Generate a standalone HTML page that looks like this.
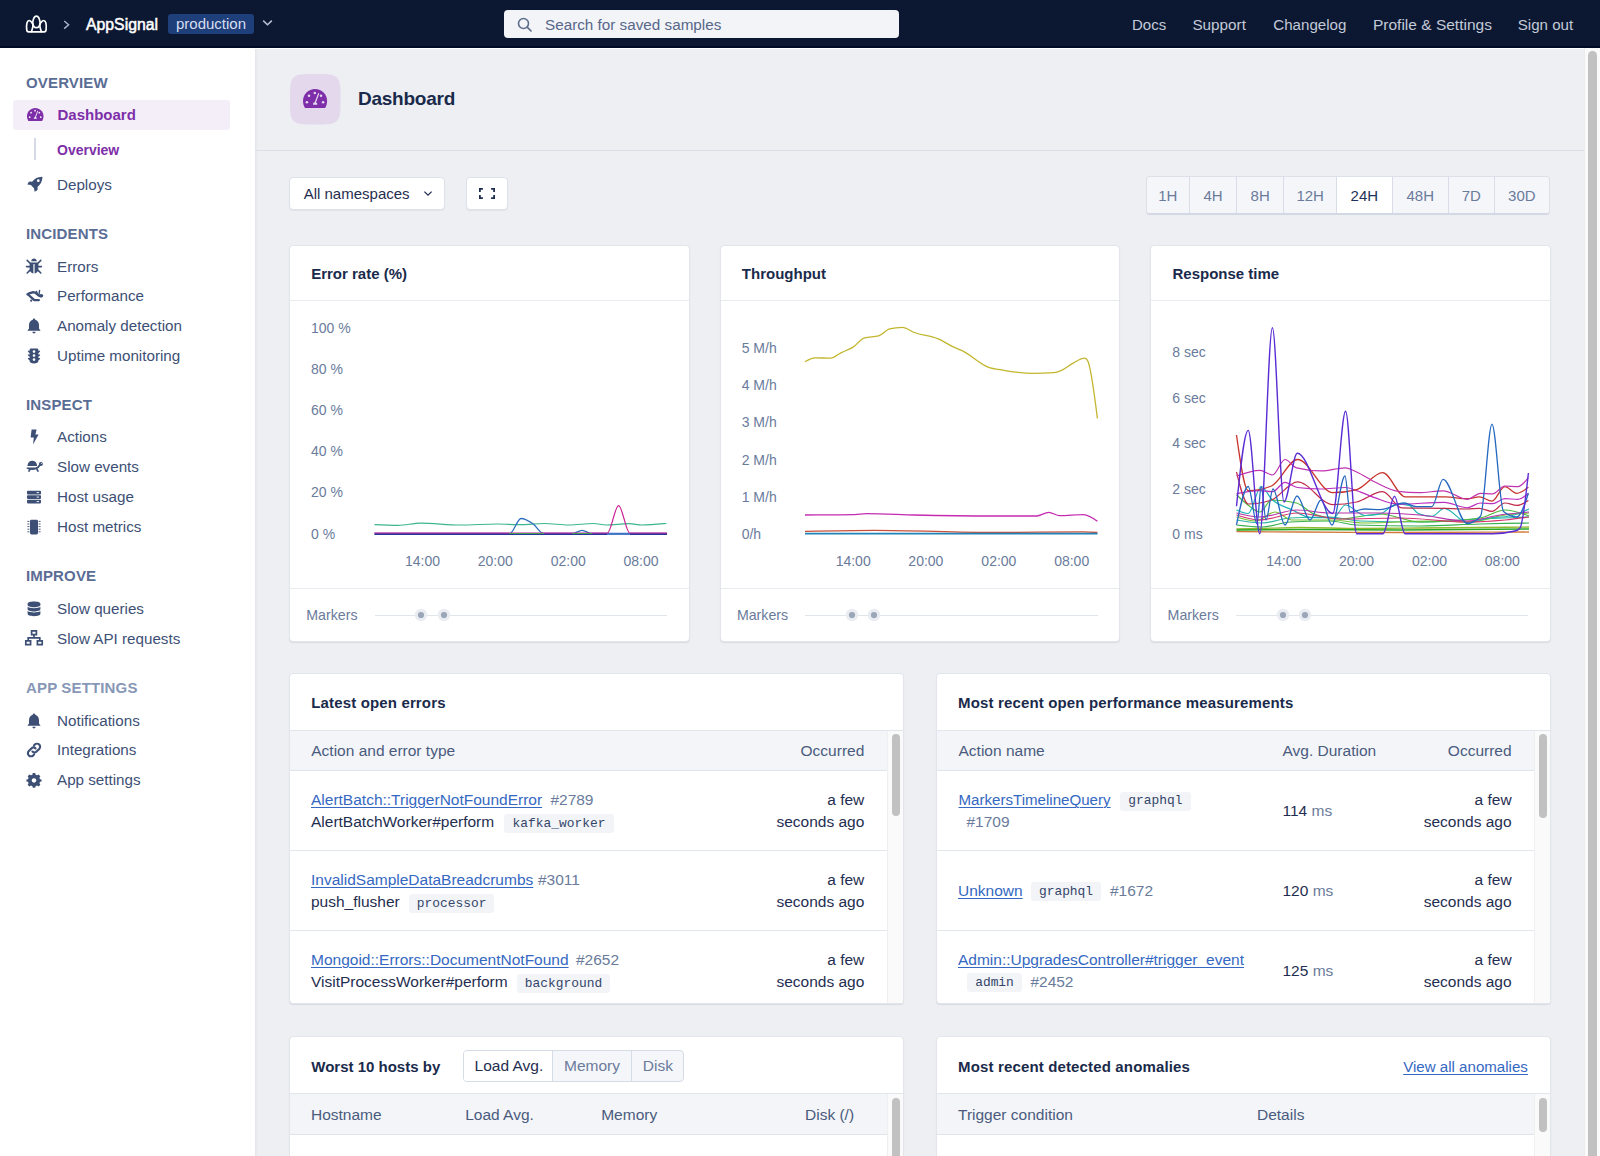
<!DOCTYPE html>
<html><head><meta charset="utf-8">
<style>
*{box-sizing:border-box;margin:0;padding:0}
html,body{width:1600px;height:1156px;overflow:hidden;background:#edeff3;font-family:"Liberation Sans",sans-serif;color:#1c2a4a}
.t{position:absolute;white-space:nowrap;line-height:1}
.b{position:absolute}
#hdr{position:absolute;left:0;top:0;width:1600px;height:48px;background:#0c1832;border-bottom:2px solid #000a27}
#side{position:absolute;left:0;top:48px;width:255px;height:1108px;background:#fff}
#main{position:absolute;left:255px;top:49px;width:1329px;height:1107px;background:#edeff3;box-shadow:inset 3px 0 3px -2px rgba(20,30,60,.06)}
#pscroll{position:absolute;left:1584px;top:48px;width:16px;height:1108px;background:#fafafa;border-left:1px solid #ececec}
#pscroll div{position:absolute;left:3px;top:3px;width:9px;height:1200px;background:#c1c1c1;border-radius:5px}
.card{position:absolute;background:#fff;border-radius:4px;border:1px solid #e2e5ec;box-shadow:0 1px 1px rgba(30,45,80,.10)}
.sep{position:absolute;height:1px;background:#e6e9ef}
svg{position:absolute;overflow:visible}
</style></head><body>
<div id="hdr"></div>
<div class="b" style="left:0;top:48px;width:1584px;height:1px;background:#fff"></div>
<svg style="left:22px;top:12px" width="30" height="24" viewBox="0 0 30 24">
<g fill="none" stroke="#fff" stroke-width="1.65" stroke-linejoin="round" stroke-linecap="round">
<path d="M6.6,19.8 C5.4,19.8 4.8,19 4.7,17.6 C4.5,15.4 4.5,12.6 5,10.8 C5.5,9.1 6.3,8.5 7.2,8.5 C8.4,8.5 9.6,10 10.6,11.6 C11,7.3 12.4,4.1 14.4,4.1 C16.4,4.1 17.8,7.3 18.2,11.6 C19.2,10 20.4,8.5 21.6,8.5 C22.5,8.5 23.3,9.1 23.8,10.8 C24.3,12.6 24.3,15.4 24.1,17.6 C24,19 23.4,19.8 22.2,19.8 Z"/>
<path d="M10.9,11.8 C11.2,14.2 12.5,15.6 14.4,15.6 C16.3,15.6 17.6,14.2 17.9,11.8"/>
<path d="M10.6,11.6 C11.3,13 11,15.4 9.4,19.6"/>
<path d="M18.2,11.6 C17.5,13 17.8,15.4 19.4,19.6"/>
</g></svg>
<svg style="left:63px;top:20px" width="8" height="10" viewBox="0 0 8 10"><path d="M1.2,1 L5.6,4.8 L1.2,8.6" fill="none" stroke="#a6b1c9" stroke-width="1.5"/></svg>
<div class="t" style="left:86px;top:16.53px;font-size:15.8px;color:#fff;-webkit-text-stroke:0.5px #fff;letter-spacing:0px;">AppSignal</div>
<div class="b" style="left:168px;top:14px;width:86px;height:20px;background:#1f3f7a;border-radius:3px"></div>
<div class="t" style="left:176px;top:16.10px;font-size:15px;color:#d8def0;">production</div>
<svg style="left:262px;top:19px" width="11" height="8" viewBox="0 0 11 8"><path d="M1.2,1.6 L5.5,5.8 L9.8,1.6" fill="none" stroke="#b9c2d6" stroke-width="1.5"/></svg>
<div class="b" style="left:504px;top:10px;width:395px;height:28px;background:#f3f4f7;border-radius:4px"></div>
<svg style="left:517px;top:17px" width="16" height="15" viewBox="0 0 16 15"><circle cx="6.5" cy="6.5" r="5" fill="none" stroke="#5d6d8c" stroke-width="1.6"/><path d="M10.2,10.2 L14,14" stroke="#5d6d8c" stroke-width="1.7" stroke-linecap="round"/></svg>
<div class="t" style="left:545px;top:17.09px;font-size:15.25px;color:#56678a;">Search for saved samples</div>
<div class="t" style="left:1132px;top:17.30px;font-size:15px;color:#c3cad8;">Docs</div>
<div class="t" style="left:1192.4px;top:17.05px;font-size:15.3px;color:#c3cad8;">Support</div>
<div class="t" style="left:1273.3px;top:17.22px;font-size:15.1px;color:#c3cad8;">Changelog</div>
<div class="t" style="left:1373px;top:16.88px;font-size:15.5px;color:#c3cad8;">Profile &amp; Settings</div>
<div class="t" style="left:1517.8px;top:17.22px;font-size:15.1px;color:#c3cad8;">Sign out</div>
<div id="side"></div>
<div class="b" style="left:13px;top:100px;width:217px;height:30px;background:#f4eef8;border-radius:3px"></div>
<div class="t" style="left:26px;top:74.90px;font-size:15px;font-weight:bold;color:#5a6d95;letter-spacing:0.15px;">OVERVIEW</div>
<svg style="left:26.5px;top:107.9px" width="16.5" height="13.1" viewBox="0 0 24.1 19"><path d="M2,19 C0.6,16.6 0,14.2 0,12 C0,5.3 5.4,0 12.05,0 C18.7,0 24.1,5.3 24.1,12 C24.1,14.2 23.5,16.6 22.1,19 Z" fill="#7d2ea8"/><g fill="#f4eef8"><circle cx="3.9" cy="13.3" r="1.3"/><circle cx="6" cy="6.8" r="1.3"/><circle cx="11.8" cy="3.9" r="1.25"/><circle cx="18" cy="6.8" r="1.3"/><circle cx="20.1" cy="13.3" r="1.3"/><path d="M15.2,4 L16.3,4.4 L13,13.4 C14,13.7 14.4,14.6 14.3,15.8 H10 C9.8,14.4 10.6,13.4 11.7,13.2 Z"/></g></svg>
<div class="t" style="left:57.5px;top:107.20px;font-size:15px;font-weight:bold;color:#7d2ea8;">Dashboard</div>
<div class="b" style="left:34px;top:138px;width:1.5px;height:22px;background:#d5dae6"></div>
<div class="t" style="left:57px;top:142.65px;font-size:14px;font-weight:bold;color:#7d2ea8;">Overview</div>
<div class="t" style="left:57px;top:176.63px;font-size:15.2px;color:#3d4f75;">Deploys</div>
<svg style="left:24px;top:174.5px" width="20" height="20" viewBox="0 0 20 20"><path fill="#3d4f75" d="M17.9,1.8 C13.7,1.9 10.5,3.7 8.1,6.7 L5.9,6.5 C5.3,6.5 4.8,6.7 4.5,7.2 L3.3,9.5 L6.9,10.1 L10,13.2 L10.6,16.7 L12.9,15.5 C13.4,15.2 13.7,14.7 13.7,14.1 L13.5,11.9 C16.5,9.5 18.3,6.3 18.5,2.3 Z"/><circle cx="14.3" cy="5.7" r="1.35" fill="#fff"/></svg>
<div class="t" style="left:26px;top:225.50px;font-size:15px;font-weight:bold;color:#5a6d95;letter-spacing:0.15px;">INCIDENTS</div>
<div class="t" style="left:57px;top:258.53px;font-size:15.2px;color:#3d4f75;">Errors</div>
<svg style="left:24px;top:256.4px" width="20" height="20" viewBox="0 0 20 20"><path fill="#3d4f75" d="M7.2,5.2 C7.4,3.6 8.5,2.6 10,2.6 C11.5,2.6 12.6,3.6 12.8,5.2 Z M5.6,6.4 H14.4 V13 C14.4,15.6 12.6,17.2 10.6,17.4 V8 H9.4 V17.4 C7.4,17.2 5.6,15.6 5.6,13 Z"/><path d="M3.2,4.4 L5.8,7 M16.8,4.4 L14.2,7 M2.6,10.6 H5.6 M17.4,10.6 H14.4 M3.2,17 L5.8,14.4 M16.8,17 L14.2,14.4" stroke="#3d4f75" stroke-width="1.6" stroke-linecap="round"/></svg>
<div class="t" style="left:57px;top:288.03px;font-size:15.2px;color:#3d4f75;">Performance</div>
<svg style="left:24px;top:285.9px" width="20" height="20" viewBox="0 0 20 20"><g fill="none" stroke="#3d4f75" stroke-linecap="round" stroke-linejoin="round"><path d="M3.6,8.2 C6,6.4 10.4,5.2 13.2,8.2 C14.4,9.6 15.6,10.4 17.2,10.2" stroke-width="2.5"/><path d="M4.6,9 C6.6,10.8 8.8,12.8 10.4,14.2 H14.8" stroke-width="2.3"/><path d="M13,7.6 L12.6,5.4 M15,8.6 L15.6,4.4" stroke-width="1.4"/></g><ellipse cx="17.2" cy="9.7" rx="2.1" ry="1.6" fill="#3d4f75"/><circle cx="7.2" cy="14.7" r="1.1" fill="#3d4f75"/><path d="M9,8.9 C10.2,9.5 11.2,10.5 11.8,11.6" stroke="#fff" stroke-width="1.1" fill="none"/></svg>
<div class="t" style="left:57px;top:318.13px;font-size:15.2px;color:#3d4f75;">Anomaly detection</div>
<svg style="left:24px;top:316.0px" width="20" height="20" viewBox="0 0 20 20"><path fill="#3d4f75" d="M10,2.6 C10.8,2.6 11.2,3.2 11.2,3.8 C13.6,4.4 15,6.6 15,9.2 V12.6 L16.6,14.8 H3.4 L5,12.6 V9.2 C5,6.6 6.4,4.4 8.8,3.8 C8.8,3.2 9.2,2.6 10,2.6 Z M8.4,15.8 H11.6 C11.6,16.8 10.8,17.4 10,17.4 C9.2,17.4 8.4,16.8 8.4,15.8 Z"/></svg>
<div class="t" style="left:57px;top:347.93px;font-size:15.2px;color:#3d4f75;">Uptime monitoring</div>
<svg style="left:24px;top:345.8px" width="20" height="20" viewBox="0 0 20 20"><path fill="#3d4f75" d="M7,2.6 H13 C13.8,2.6 14.4,3.2 14.4,4 V4.8 L16.2,4.8 C15.8,6.2 15.2,6.8 14.4,7 V8.4 L16.2,8.4 C15.8,9.8 15.2,10.4 14.4,10.6 V12 L16.2,12 C15.8,13.4 15.2,14 14.4,14.2 V15 C14.4,16.4 12.6,17.4 10,17.4 C7.4,17.4 5.6,16.4 5.6,15 V14.2 C4.8,14 4.2,13.4 3.8,12 L5.6,12 V10.6 C4.8,10.4 4.2,9.8 3.8,8.4 L5.6,8.4 V7 C4.8,6.8 4.2,6.2 3.8,4.8 L5.6,4.8 V4 C5.6,3.2 6.2,2.6 7,2.6 Z"/><circle cx="10" cy="5.6" r="1.3" fill="#fff"/><circle cx="10" cy="9.6" r="1.3" fill="#fff"/><circle cx="10" cy="13.6" r="1.3" fill="#fff"/></svg>
<div class="t" style="left:26px;top:396.80px;font-size:15px;font-weight:bold;color:#5a6d95;letter-spacing:0.15px;">INSPECT</div>
<div class="t" style="left:57px;top:429.43px;font-size:15.2px;color:#3d4f75;">Actions</div>
<svg style="left:24px;top:427.3px" width="20" height="20" viewBox="0 0 20 20"><path fill="#3d4f75" d="M7.6,2.4 H12.6 L11.4,7.6 H14.6 L9,17.6 L9.8,10.6 H6.6 Z"/></svg>
<div class="t" style="left:57px;top:459.43px;font-size:15.2px;color:#3d4f75;">Slow events</div>
<svg style="left:24px;top:457.3px" width="20" height="20" viewBox="0 0 20 20"><path fill="#3d4f75" d="M3.4,8.9 C3.6,5.6 5.8,3.7 8.3,3.7 C10.8,3.7 13,5.6 13.2,8.9 Z M2.7,10.4 H13.9 C13.4,12 11.5,12.9 8.4,12.9 C5.4,12.9 3.6,12.1 2.7,11.8 Z"/><g fill="none" stroke="#3d4f75" stroke-linecap="round"><path d="M6.2,11.8 L5,14.1 M12.8,11.8 L14,14.1" stroke-width="1.7"/><path d="M12.6,11 C14,10.6 15,9.6 15.8,7.8" stroke-width="1.8"/></g><circle cx="16.9" cy="6.9" r="2" fill="#3d4f75"/><circle cx="17.4" cy="6.5" r="0.5" fill="#fff"/></svg>
<div class="t" style="left:57px;top:489.33px;font-size:15.2px;color:#3d4f75;">Host usage</div>
<svg style="left:24px;top:487.2px" width="20" height="20" viewBox="0 0 20 20"><rect fill="#3d4f75" x="3" y="3.8" width="14" height="3.6" rx="0.8"/><rect fill="#3d4f75" x="3" y="8.3" width="14" height="3.6" rx="0.8"/><rect fill="#3d4f75" x="3" y="12.8" width="14" height="3.6" rx="0.8"/><path d="M12.6,5.6 H15 M12.6,10.1 H15 M12.6,14.6 H15" stroke="#fff" stroke-width="0.9"/></svg>
<div class="t" style="left:57px;top:518.83px;font-size:15.2px;color:#3d4f75;">Host metrics</div>
<svg style="left:24px;top:516.7px" width="20" height="20" viewBox="0 0 20 20"><rect fill="#3d4f75" x="6" y="2.8" width="8" height="14.6" rx="1.4"/><path d="M3.4,4.4 H5.4 M3.4,7 H5.4 M3.4,9.6 H5.4 M3.4,12.2 H5.4 M3.4,14.8 H5.4 M14.6,4.4 H16.6 M14.6,7 H16.6 M14.6,9.6 H16.6 M14.6,12.2 H16.6 M14.6,14.8 H16.6" stroke="#3d4f75" stroke-width="0.9"/></svg>
<div class="t" style="left:26px;top:568.30px;font-size:15px;font-weight:bold;color:#5a6d95;letter-spacing:0.15px;">IMPROVE</div>
<div class="t" style="left:57px;top:600.73px;font-size:15.2px;color:#3d4f75;">Slow queries</div>
<svg style="left:24px;top:598.6px" width="20" height="20" viewBox="0 0 20 20"><path fill="#3d4f75" d="M3.6,4.8 C3.6,3.4 6.4,2.6 10,2.6 C13.6,2.6 16.4,3.4 16.4,4.8 V6 C16.4,7.4 13.6,8.2 10,8.2 C6.4,8.2 3.6,7.4 3.6,6 Z M3.6,7.8 C5,8.8 7.4,9.2 10,9.2 C12.6,9.2 15,8.8 16.4,7.8 V10.2 C16.4,11.6 13.6,12.4 10,12.4 C6.4,12.4 3.6,11.6 3.6,10.2 Z M3.6,12 C5,13 7.4,13.4 10,13.4 C12.6,13.4 15,13 16.4,12 V14.8 C16.4,16.2 13.6,17.2 10,17.2 C6.4,17.2 3.6,16.2 3.6,14.8 Z"/></svg>
<div class="t" style="left:57px;top:630.53px;font-size:15.2px;color:#3d4f75;">Slow API requests</div>
<svg style="left:24px;top:628.4px" width="20" height="20" viewBox="0 0 20 20"><path d="M7.6,2.8 H12.4 V6.6 H7.6 Z M1.8,12.8 H6.6 V16.6 H1.8 Z M13.4,12.8 H18.2 V16.6 H13.4 Z M10,6.6 V9.8 M4.2,12.8 V9.8 H15.8 V12.8" fill="none" stroke="#3d4f75" stroke-width="1.7"/></svg>
<div class="t" style="left:26px;top:679.80px;font-size:15px;font-weight:bold;color:#8797b6;letter-spacing:0.15px;">APP SETTINGS</div>
<div class="t" style="left:57px;top:712.73px;font-size:15.2px;color:#3d4f75;">Notifications</div>
<svg style="left:24px;top:710.6px" width="20" height="20" viewBox="0 0 20 20"><path fill="#3d4f75" d="M10,2.6 C10.8,2.6 11.2,3.2 11.2,3.8 C13.6,4.4 15,6.6 15,9.2 V12.6 L16.6,14.8 H3.4 L5,12.6 V9.2 C5,6.6 6.4,4.4 8.8,3.8 C8.8,3.2 9.2,2.6 10,2.6 Z M8.4,15.8 H11.6 C11.6,16.8 10.8,17.4 10,17.4 C9.2,17.4 8.4,16.8 8.4,15.8 Z"/></svg>
<div class="t" style="left:57px;top:742.23px;font-size:15.2px;color:#3d4f75;">Integrations</div>
<svg style="left:24px;top:740.1px" width="20" height="20" viewBox="0 0 20 20"><path d="M8.4,11.6 C9.6,12.8 11.4,12.8 12.6,11.6 L15.2,9 C16.4,7.8 16.4,5.8 15.2,4.6 C14,3.4 12,3.4 10.8,4.6 L10,5.4 M11.6,8.4 C10.4,7.2 8.6,7.2 7.4,8.4 L4.8,11 C3.6,12.2 3.6,14.2 4.8,15.4 C6,16.6 8,16.6 9.2,15.4 L10,14.6" fill="none" stroke="#3d4f75" stroke-width="2.1" stroke-linecap="round"/></svg>
<div class="t" style="left:57px;top:771.73px;font-size:15.2px;color:#3d4f75;">App settings</div>
<svg style="left:24px;top:769.6px" width="20" height="20" viewBox="0 0 20 20"><path fill="#3d4f75" fill-rule="evenodd" d="M8.6,2.6 H11.4 L11.8,4.6 L13.4,5.4 L15.2,4.4 L17.2,6.4 L16.2,8.2 L16.8,9.8 L18.6,10.2 V12.4 L16.8,12.8 L16.2,14.4 L17.2,16.2 L15.2,18 L13.4,17 L11.8,17.8 L11.4,19.6 H8.6 L8.2,17.8 L6.6,17 L4.8,18 L2.8,16.2 L3.8,14.4 L3.2,12.8 L1.4,12.4 V10.2 L3.2,9.8 L3.8,8.2 L2.8,6.4 L4.8,4.4 L6.6,5.4 L8.2,4.6 Z M10,8.6 A2.6,2.6 0 1 0 10.01,8.6 Z" transform="translate(1.2,0.6) scale(0.88)"/></svg>
<div id="main"></div>
<div id="pscroll"><div></div></div>
<svg style="left:289.5px;top:73.5px" width="50.5" height="50.5" viewBox="0 0 50.5 50.5"><path d="M50.50,25.25 L50.46,33.79 L50.33,36.85 L50.11,39.10 L49.81,40.92 L49.42,42.47 L48.94,43.81 L48.36,44.97 L47.68,46.00 L46.90,46.90 L46.00,47.68 L44.97,48.36 L43.81,48.94 L42.47,49.42 L40.92,49.81 L39.10,50.11 L36.85,50.33 L33.79,50.46 L25.25,50.50 L16.71,50.46 L13.65,50.33 L11.40,50.11 L9.58,49.81 L8.03,49.42 L6.69,48.94 L5.53,48.36 L4.50,47.68 L3.60,46.90 L2.82,46.00 L2.14,44.97 L1.56,43.81 L1.08,42.47 L0.69,40.92 L0.39,39.10 L0.17,36.85 L0.04,33.79 L0.00,25.25 L0.04,16.71 L0.17,13.65 L0.39,11.40 L0.69,9.58 L1.08,8.03 L1.56,6.69 L2.14,5.53 L2.82,4.50 L3.60,3.60 L4.50,2.82 L5.53,2.14 L6.69,1.56 L8.03,1.08 L9.58,0.69 L11.40,0.39 L13.65,0.17 L16.71,0.04 L25.25,0.00 L33.79,0.04 L36.85,0.17 L39.10,0.39 L40.92,0.69 L42.47,1.08 L43.81,1.56 L44.97,2.14 L46.00,2.82 L46.90,3.60 L47.68,4.50 L48.36,5.53 L48.94,6.69 L49.42,8.03 L49.81,9.58 L50.11,11.40 L50.33,13.65 L50.46,16.71 Z" fill="#e4d8ed"/></svg>
<svg style="left:302.9px;top:88.9px" width="24.1" height="19" viewBox="0 0 24.1 19"><path d="M2,19 C0.6,16.6 0,14.2 0,12 C0,5.3 5.4,0 12.05,0 C18.7,0 24.1,5.3 24.1,12 C24.1,14.2 23.5,16.6 22.1,19 Z" fill="#7d2ea8"/><g fill="#e4d8ed"><circle cx="3.9" cy="13.3" r="1.3"/><circle cx="6" cy="6.8" r="1.3"/><circle cx="11.8" cy="3.9" r="1.25"/><circle cx="18" cy="6.8" r="1.3"/><circle cx="20.1" cy="13.3" r="1.3"/><path d="M15.2,4 L16.3,4.4 L13,13.4 C14,13.7 14.4,14.6 14.3,15.8 H10 C9.8,14.4 10.6,13.4 11.7,13.2 Z"/></g></svg>
<div class="t" style="left:358px;top:88.92px;font-size:19px;font-weight:bold;color:#1a2a4b;letter-spacing:-0.25px;">Dashboard</div>
<div class="sep" style="left:255px;top:150px;width:1329px;background:#dadfe8"></div>
<div class="b" style="left:289px;top:176.5px;width:155.5px;height:33px;background:#fff;border:1px solid #dde1ea;border-radius:4px;box-shadow:0 1px 1px rgba(30,45,80,.06)"></div>
<div class="t" style="left:303.7px;top:186.10px;font-size:15px;color:#1f2e50;">All namespaces</div>
<svg style="left:422.5px;top:189.5px" width="10" height="7" viewBox="0 0 10 7"><path d="M1.4,1.6 L5,5.2 L8.6,1.6" fill="none" stroke="#1f2e50" stroke-width="1.2"/></svg>
<div class="b" style="left:466px;top:176.5px;width:42px;height:33px;background:#fff;border:1px solid #dde1ea;border-radius:4px;box-shadow:0 1px 1px rgba(30,45,80,.06)"></div>
<svg style="left:479.4px;top:188px" width="16" height="11" viewBox="0 0 16 11"><path d="M0.9,3.9 V0.9 H3.9 M12.1,0.9 H15.1 V3.9 M15.1,7.1 V10.1 H12.1 M3.9,10.1 H0.9 V7.1" fill="none" stroke="#1f2e50" stroke-width="1.8"/></svg>
<div class="b" style="left:1145.5px;top:176px;width:404.5px;height:38.5px;background:#f5f6f9;border:1px solid #dbe0e9;border-bottom:2px solid #d3d9e4;border-radius:4px"></div>
<div class="b" style="left:1189.0px;top:177px;width:1.2px;height:36px;background:#d8dde7"></div>
<div class="b" style="left:1236.1px;top:177px;width:1.2px;height:36px;background:#d8dde7"></div>
<div class="b" style="left:1283.2px;top:177px;width:1.2px;height:36px;background:#d8dde7"></div>
<div class="b" style="left:1336.7px;top:177px;width:55.299999999999955px;height:36px;background:#fff"></div>
<div class="b" style="left:1336.2px;top:177px;width:1.2px;height:36px;background:#d8dde7"></div>
<div class="b" style="left:1391.5px;top:177px;width:1.2px;height:36px;background:#d8dde7"></div>
<div class="b" style="left:1448.0px;top:177px;width:1.2px;height:36px;background:#d8dde7"></div>
<div class="b" style="left:1493.7px;top:177px;width:1.2px;height:36px;background:#d8dde7"></div>
<div class="t" style="left:1146px;width:43.5px;text-align:center;top:188.20px;font-size:15px;color:#6a7b9c">1H</div>
<div class="t" style="left:1189.5px;width:47.09999999999991px;text-align:center;top:188.20px;font-size:15px;color:#6a7b9c">4H</div>
<div class="t" style="left:1236.6px;width:47.100000000000136px;text-align:center;top:188.20px;font-size:15px;color:#6a7b9c">8H</div>
<div class="t" style="left:1283.7px;width:53.0px;text-align:center;top:188.20px;font-size:15px;color:#6a7b9c">12H</div>
<div class="t" style="left:1336.7px;width:55.299999999999955px;text-align:center;top:188.20px;font-size:15px;color:#1f3358">24H</div>
<div class="t" style="left:1392px;width:56.5px;text-align:center;top:188.20px;font-size:15px;color:#6a7b9c">48H</div>
<div class="t" style="left:1448.5px;width:45.700000000000045px;text-align:center;top:188.20px;font-size:15px;color:#6a7b9c">7D</div>
<div class="t" style="left:1494.2px;width:55.299999999999955px;text-align:center;top:188.20px;font-size:15px;color:#6a7b9c">30D</div>
<div class="card" style="left:289px;top:245px;width:400.67px;height:397px"></div>
<div class="t" style="left:311.2px;top:266.10px;font-size:15px;font-weight:bold;color:#1a2a4b;">Error rate (%)</div>
<div class="sep" style="left:290px;top:300px;width:398.67px;background:#e8ebf0"></div>
<div class="t" style="left:311px;top:320.65px;font-size:14px;color:#6a7b9b;">100 %</div>
<div class="t" style="left:311px;top:361.85px;font-size:14px;color:#6a7b9b;">80 %</div>
<div class="t" style="left:311px;top:403.05px;font-size:14px;color:#6a7b9b;">60 %</div>
<div class="t" style="left:311px;top:444.25px;font-size:14px;color:#6a7b9b;">40 %</div>
<div class="t" style="left:311px;top:485.45px;font-size:14px;color:#6a7b9b;">20 %</div>
<div class="t" style="left:311px;top:526.65px;font-size:14px;color:#6a7b9b;">0 %</div>
<div class="t" style="left:405px;top:554.15px;font-size:14px;color:#6a7b9b;">14:00</div>
<div class="t" style="left:477.7px;top:554.15px;font-size:14px;color:#6a7b9b;">20:00</div>
<div class="t" style="left:550.7px;top:554.15px;font-size:14px;color:#6a7b9b;">02:00</div>
<div class="t" style="left:623.5px;top:554.15px;font-size:14px;color:#6a7b9b;">08:00</div>
<div class="sep" style="left:290px;top:588px;width:398.67px;background:#e8ebf0"></div>
<div class="t" style="left:306.25px;top:608.48px;font-size:14.2px;color:#6a7b9b;">Markers</div>
<div class="sep" style="left:374.5px;top:615px;width:292.5px;background:#e1e5ec"></div>
<svg style="left:414.2px;top:608.4px" width="14" height="14" viewBox="0 0 14 14"><circle cx="7" cy="7" r="6.2" fill="#e9ecf1"/><circle cx="7" cy="7" r="3.1" fill="#9ba6b9"/></svg>
<svg style="left:436.6px;top:608.4px" width="14" height="14" viewBox="0 0 14 14"><circle cx="7" cy="7" r="6.2" fill="#e9ecf1"/><circle cx="7" cy="7" r="3.1" fill="#9ba6b9"/></svg>
<div class="card" style="left:719.67px;top:245px;width:400.67px;height:397px"></div>
<div class="t" style="left:741.87px;top:266.10px;font-size:15px;font-weight:bold;color:#1a2a4b;">Throughput</div>
<div class="sep" style="left:720.67px;top:300px;width:398.67px;background:#e8ebf0"></div>
<div class="t" style="left:741.67px;top:340.95px;font-size:14px;color:#6a7b9b;">5 M/h</div>
<div class="t" style="left:741.67px;top:378.15px;font-size:14px;color:#6a7b9b;">4 M/h</div>
<div class="t" style="left:741.67px;top:415.45px;font-size:14px;color:#6a7b9b;">3 M/h</div>
<div class="t" style="left:741.67px;top:452.65px;font-size:14px;color:#6a7b9b;">2 M/h</div>
<div class="t" style="left:741.67px;top:489.95px;font-size:14px;color:#6a7b9b;">1 M/h</div>
<div class="t" style="left:741.67px;top:527.15px;font-size:14px;color:#6a7b9b;">0/h</div>
<div class="t" style="left:835.67px;top:554.15px;font-size:14px;color:#6a7b9b;">14:00</div>
<div class="t" style="left:908.3699999999999px;top:554.15px;font-size:14px;color:#6a7b9b;">20:00</div>
<div class="t" style="left:981.3699999999999px;top:554.15px;font-size:14px;color:#6a7b9b;">02:00</div>
<div class="t" style="left:1054.17px;top:554.15px;font-size:14px;color:#6a7b9b;">08:00</div>
<div class="sep" style="left:720.67px;top:588px;width:398.67px;background:#e8ebf0"></div>
<div class="t" style="left:736.92px;top:608.48px;font-size:14.2px;color:#6a7b9b;">Markers</div>
<div class="sep" style="left:805.17px;top:615px;width:292.5px;background:#e1e5ec"></div>
<svg style="left:844.8699999999999px;top:608.4px" width="14" height="14" viewBox="0 0 14 14"><circle cx="7" cy="7" r="6.2" fill="#e9ecf1"/><circle cx="7" cy="7" r="3.1" fill="#9ba6b9"/></svg>
<svg style="left:867.27px;top:608.4px" width="14" height="14" viewBox="0 0 14 14"><circle cx="7" cy="7" r="6.2" fill="#e9ecf1"/><circle cx="7" cy="7" r="3.1" fill="#9ba6b9"/></svg>
<div class="card" style="left:1150.33px;top:245px;width:400.67px;height:397px"></div>
<div class="t" style="left:1172.53px;top:266.10px;font-size:15px;font-weight:bold;color:#1a2a4b;">Response time</div>
<div class="sep" style="left:1151.33px;top:300px;width:398.67px;background:#e8ebf0"></div>
<div class="t" style="left:1172.33px;top:345.15px;font-size:14px;color:#6a7b9b;">8 sec</div>
<div class="t" style="left:1172.33px;top:390.65px;font-size:14px;color:#6a7b9b;">6 sec</div>
<div class="t" style="left:1172.33px;top:436.15px;font-size:14px;color:#6a7b9b;">4 sec</div>
<div class="t" style="left:1172.33px;top:481.65px;font-size:14px;color:#6a7b9b;">2 sec</div>
<div class="t" style="left:1172.33px;top:527.15px;font-size:14px;color:#6a7b9b;">0 ms</div>
<div class="t" style="left:1266.33px;top:554.15px;font-size:14px;color:#6a7b9b;">14:00</div>
<div class="t" style="left:1339.03px;top:554.15px;font-size:14px;color:#6a7b9b;">20:00</div>
<div class="t" style="left:1412.03px;top:554.15px;font-size:14px;color:#6a7b9b;">02:00</div>
<div class="t" style="left:1484.83px;top:554.15px;font-size:14px;color:#6a7b9b;">08:00</div>
<div class="sep" style="left:1151.33px;top:588px;width:398.67px;background:#e8ebf0"></div>
<div class="t" style="left:1167.58px;top:608.48px;font-size:14.2px;color:#6a7b9b;">Markers</div>
<div class="sep" style="left:1235.83px;top:615px;width:292.5px;background:#e1e5ec"></div>
<svg style="left:1275.53px;top:608.4px" width="14" height="14" viewBox="0 0 14 14"><circle cx="7" cy="7" r="6.2" fill="#e9ecf1"/><circle cx="7" cy="7" r="3.1" fill="#9ba6b9"/></svg>
<svg style="left:1297.9299999999998px;top:608.4px" width="14" height="14" viewBox="0 0 14 14"><circle cx="7" cy="7" r="6.2" fill="#e9ecf1"/><circle cx="7" cy="7" r="3.1" fill="#9ba6b9"/></svg>
<svg style="left:0;top:0" width="1600" height="1156"><path d="M374.5,524.6 C382.3,525.0 390.2,525.4 398.0,525.4 C405.6,525.4 413.1,523.1 420.7,523.1 C433.8,523.1 446.9,525.0 460.0,525.0 C472.5,525.0 485.1,524.0 497.6,524.0 C505.1,524.0 512.5,524.6 520.0,524.6 C528.2,524.6 536.3,523.5 544.5,523.5 C552.6,523.5 560.8,525.0 568.9,525.0 C577.0,525.0 585.2,523.5 593.3,523.5 C597.7,523.5 602.0,525.0 606.4,525.0 C613.9,525.0 621.4,523.7 628.9,523.7 C633.3,523.7 637.6,525.0 642.0,525.0 C650.1,525.0 658.3,524.2 666.4,523.5" fill="none" stroke="#3db68c" stroke-width="1.2" stroke-linejoin="round"/><path d="M374.5,533.5 C419.6,533.5 464.7,533.5 509.8,533.5 C513.5,533.5 517.3,518.5 521.0,518.5 C525.1,518.5 529.1,521.1 533.2,524.0 C536.6,526.4 540.1,533.5 543.5,533.5 C553.2,533.5 562.9,533.5 572.6,533.5 C575.7,533.5 578.9,530.3 582.0,530.3 C585.1,530.3 588.3,533.5 591.4,533.5 C616.6,533.5 641.8,533.5 667.0,533.5" fill="none" stroke="#2f6fc0" stroke-width="1.3" stroke-linejoin="round"/><path d="M374.5,533.2 C452.1,533.2 529.7,533.2 607.3,533.2 C611.1,533.2 614.8,505.7 618.6,505.7 C622.3,505.7 626.1,533.2 629.8,533.2 C642.2,533.2 654.6,533.2 667.0,533.2" fill="none" stroke="#c81e92" stroke-width="1.2" stroke-linejoin="round"/><path d="M509,533.6 H544 M572,533.6 H592" stroke="#55c33a" stroke-width="1.2"/><path d="M374.5,534.3 H667" stroke="#27369c" stroke-width="1.2"/><path d="M607,534.2 H630" stroke="#5b8fd8" stroke-width="1.2"/></svg>
<svg style="left:0;top:0" width="1600" height="1156"><path d="M804.9,361.8 C808.2,359.8 811.6,357.8 814.9,357.8 C820.2,357.8 825.5,358.2 830.8,358.2 C834.1,358.2 837.5,354.5 840.8,352.8 C844.8,350.8 848.7,349.9 852.7,347.4 C856.7,344.9 860.6,339.0 864.6,337.9 C869.3,336.6 873.9,337.2 878.6,335.9 C882.2,334.9 885.9,329.8 889.5,328.9 C893.8,327.8 898.1,327.3 902.4,327.3 C906.4,327.3 910.4,331.0 914.4,332.5 C922.4,335.5 930.3,335.4 938.3,338.9 C942.9,340.9 947.6,344.2 952.2,346.4 C955.8,348.2 959.5,349.4 963.1,351.2 C971.4,355.4 979.7,364.0 988.0,367.1 C993.3,369.1 998.6,369.4 1003.9,370.3 C1013.9,372.0 1023.8,373.3 1033.8,373.3 C1040.4,373.3 1047.1,373.1 1053.7,372.7 C1056.3,372.5 1059.0,371.4 1061.6,370.3 C1065.6,368.6 1069.6,364.9 1073.6,362.8 C1077.2,360.9 1080.9,358.2 1084.5,358.2 C1085.5,358.2 1086.5,358.9 1087.5,360.4 C1090.8,365.2 1094.1,391.9 1097.4,418.5" fill="none" stroke="#c3b62c" stroke-width="1.3" stroke-linejoin="round"/><path d="M805.0,515.0 C821.6,514.9 838.1,514.9 854.7,514.6 C858.7,514.5 862.6,513.6 866.6,513.6 C882.5,513.6 898.5,514.6 914.4,515.0 C940.9,515.6 967.5,516.0 994.0,516.0 C1008.2,516.0 1022.5,516.0 1036.7,516.0 C1040.7,516.0 1044.7,512.4 1048.7,512.4 C1052.3,512.4 1056.0,515.6 1059.6,515.6 C1067.6,515.6 1075.5,514.6 1083.5,514.6 C1088.1,514.6 1092.8,517.9 1097.4,521.3" fill="none" stroke="#c52bb0" stroke-width="1.3" stroke-linejoin="round"/><path d="M805.0,531.3 C828.2,530.8 851.4,530.3 874.6,530.3 C914.4,530.3 954.2,532.5 994.0,532.5 C1023.8,532.5 1053.7,531.9 1083.5,531.9 C1088.1,531.9 1092.8,532.2 1097.4,532.5" fill="none" stroke="#c8503a" stroke-width="1.3" stroke-linejoin="round"/><path d="M805,533.6 H1097.5" stroke="#2283b8" stroke-width="1.6"/></svg>
<svg style="left:0;top:0" width="1600" height="1156"><path d="M1236.5,531.5 C1257.7,531.7 1278.8,531.9 1300.0,532.0 C1333.3,532.2 1366.7,532.5 1400.0,532.5 C1443.0,532.5 1486.0,532.2 1529.0,532.0" fill="none" stroke="#d2793a" stroke-width="1.3" stroke-linejoin="round"/><path d="M1236.5,529.0 C1244.3,528.8 1252.2,528.7 1260.0,528.5 C1273.3,528.2 1286.7,527.5 1300.0,527.5 C1320.0,527.5 1340.0,528.5 1360.0,528.5 C1380.0,528.5 1400.0,528.2 1420.0,528.0 C1440.0,527.8 1460.0,527.7 1480.0,527.5 C1496.3,527.3 1512.7,527.2 1529.0,527.0" fill="none" stroke="#8fb82a" stroke-width="1.3" stroke-linejoin="round"/><path d="M1236.5,530.0 C1257.7,529.8 1278.8,529.5 1300.0,529.5 C1333.3,529.5 1366.7,530.0 1400.0,530.0 C1443.0,530.0 1486.0,529.5 1529.0,529.0" fill="none" stroke="#26a826" stroke-width="1.5" stroke-linejoin="round"/><path d="M1236.5,525.0 C1245.0,526.0 1253.5,527.0 1262.0,527.0 C1271.3,527.0 1280.7,522.5 1290.0,522.0 C1303.3,521.3 1316.7,521.0 1330.0,521.0 C1338.7,521.0 1347.3,524.7 1356.0,525.0 C1377.3,525.7 1398.7,526.0 1420.0,526.0 C1440.0,526.0 1460.0,524.5 1480.0,524.0 C1496.3,523.6 1512.7,523.3 1529.0,523.0" fill="none" stroke="#36b04f" stroke-width="1.2" stroke-linejoin="round"/><path d="M1236.5,520.0 C1245.0,521.5 1253.5,523.0 1262.0,523.0 C1271.3,523.0 1280.7,518.5 1290.0,518.0 C1303.3,517.3 1316.7,517.0 1330.0,517.0 C1340.0,517.0 1350.0,520.7 1360.0,521.0 C1380.0,521.7 1400.0,522.0 1420.0,522.0 C1440.0,522.0 1460.0,519.9 1480.0,519.0 C1496.3,518.3 1512.7,517.6 1529.0,517.0" fill="none" stroke="#2cb5a0" stroke-width="1.2" stroke-linejoin="round"/><path d="M1236.5,517.0 C1243.0,519.0 1249.5,521.0 1256.0,521.0 C1262.3,521.0 1268.7,512.0 1275.0,512.0 C1280.7,512.0 1286.3,520.0 1292.0,520.0 C1304.7,520.0 1317.3,520.0 1330.0,520.0 C1341.7,520.0 1353.3,523.0 1365.0,523.0 C1386.7,523.0 1408.3,521.0 1430.0,521.0 C1443.3,521.0 1456.7,522.0 1470.0,522.0 C1481.7,522.0 1493.3,516.5 1505.0,515.0 C1513.0,514.0 1521.0,513.5 1529.0,513.0" fill="none" stroke="#7bc232" stroke-width="1.2" stroke-linejoin="round"/><path d="M1236.5,494.8 C1240.3,498.5 1244.2,502.2 1248.0,505.0 C1252.0,508.0 1256.0,512.0 1260.0,512.0 C1263.8,512.0 1267.7,500.0 1271.5,500.0 C1279.8,500.0 1288.2,501.0 1296.5,503.0 C1302.0,504.3 1307.5,511.3 1313.0,513.5 C1322.0,517.2 1331.0,519.0 1340.0,519.0 C1353.3,519.0 1366.7,514.0 1380.0,514.0 C1393.3,514.0 1406.7,522.0 1420.0,522.0 C1440.0,522.0 1460.0,520.7 1480.0,518.0 C1488.3,516.9 1496.7,510.0 1505.0,510.0 C1513.0,510.0 1521.0,513.0 1529.0,516.0" fill="none" stroke="#4bb83a" stroke-width="1.2" stroke-linejoin="round"/><path d="M1236.5,510.0 C1240.4,511.8 1244.3,513.5 1248.2,513.5 C1252.5,513.5 1256.9,486.5 1261.2,486.5 C1264.6,486.5 1268.1,495.6 1271.5,499.0 C1278.4,505.8 1285.4,506.8 1292.3,510.0 C1298.5,512.9 1304.8,517.6 1311.0,517.6 C1318.6,517.6 1326.2,517.6 1333.8,517.6 C1337.6,517.6 1341.5,505.0 1345.3,505.0 C1351.9,505.0 1358.4,515.5 1365.0,515.5 C1370.0,515.5 1375.0,515.0 1380.0,513.9 C1385.7,512.7 1391.3,504.2 1397.0,504.2 C1401.0,504.2 1405.0,504.6 1409.0,505.4 C1412.3,506.1 1415.5,512.7 1418.8,513.9 C1423.2,515.5 1427.6,516.3 1432.0,516.3 C1436.1,516.3 1440.1,508.4 1444.2,508.4 C1451.9,508.4 1459.5,522.3 1467.2,522.3 C1474.8,522.3 1482.4,519.1 1490.0,518.0 C1496.7,517.1 1503.3,517.3 1510.0,516.0 C1516.3,514.7 1522.7,511.9 1529.0,509.0" fill="none" stroke="#1eb3b8" stroke-width="1.2" stroke-linejoin="round"/><path d="M1236.5,513.0 C1244.3,515.0 1252.2,517.0 1260.0,517.0 C1272.3,517.0 1284.7,510.0 1297.0,510.0 C1308.0,510.0 1319.0,513.0 1330.0,513.0 C1346.7,513.0 1363.3,513.0 1380.0,513.0 C1393.3,513.0 1406.7,513.9 1420.0,515.0 C1435.7,516.3 1451.3,521.0 1467.0,521.0 C1478.0,521.0 1489.0,516.5 1500.0,515.0 C1509.7,513.6 1519.3,512.8 1529.0,512.0" fill="none" stroke="#b833a8" stroke-width="1.2" stroke-linejoin="round"/><path d="M1236.5,515.0 C1244.3,517.5 1252.2,520.0 1260.0,520.0 C1272.3,520.0 1284.7,513.0 1297.0,513.0 C1311.3,513.0 1325.7,519.0 1340.0,519.0 C1360.0,519.0 1380.0,518.0 1400.0,518.0 C1422.3,518.0 1444.7,522.0 1467.0,522.0 C1479.7,522.0 1492.3,521.2 1505.0,520.0 C1513.0,519.2 1521.0,518.1 1529.0,517.0" fill="none" stroke="#d6336e" stroke-width="1.2" stroke-linejoin="round"/><path d="M1236.5,472.0 C1240.4,488.0 1244.3,504.0 1248.2,504.0 C1256.0,504.0 1263.7,502.7 1271.5,500.0 C1280.2,497.0 1288.8,481.8 1297.5,481.8 C1309.3,481.8 1321.0,504.6 1332.8,504.6 C1340.8,504.6 1348.7,503.7 1356.7,502.0 C1365.3,500.1 1374.0,491.7 1382.6,491.7 C1389.0,491.7 1395.4,507.6 1401.8,507.8 C1416.3,508.2 1430.9,508.1 1445.4,508.4 C1452.7,508.6 1459.9,509.0 1467.2,509.0 C1471.2,509.0 1475.3,508.4 1479.3,508.4 C1483.5,508.4 1487.8,511.4 1492.0,511.4 C1496.3,511.4 1500.5,503.0 1504.8,503.0 C1508.8,503.0 1512.9,505.4 1516.9,505.4 C1520.7,505.4 1524.6,502.9 1528.4,500.5" fill="none" stroke="#c02b4a" stroke-width="1.2" stroke-linejoin="round"/><path d="M1236.5,493.7 C1244.3,492.1 1252.2,490.6 1260.0,490.6 C1264.2,490.6 1268.4,491.7 1272.6,491.7 C1276.7,491.7 1280.9,482.3 1285.0,482.3 C1289.2,482.3 1293.3,487.0 1297.5,487.5 C1305.5,488.5 1313.4,489.0 1321.4,489.0 C1329.4,489.0 1337.3,487.5 1345.3,487.5 C1349.1,487.5 1352.9,489.4 1356.7,490.6 C1362.9,492.6 1369.2,495.8 1375.4,497.9 C1382.9,500.5 1390.5,504.2 1398.0,504.2 C1413.4,504.2 1428.8,502.3 1444.2,502.3 C1451.9,502.3 1459.5,507.8 1467.2,507.8 C1471.6,507.8 1476.1,503.0 1480.5,503.0 C1484.5,503.0 1488.6,503.6 1492.6,503.6 C1496.7,503.6 1500.7,498.7 1504.8,498.7 C1509.2,498.7 1513.6,499.3 1518.0,499.3 C1521.5,499.3 1524.9,496.3 1528.4,493.3" fill="none" stroke="#bb2fbf" stroke-width="1.2" stroke-linejoin="round"/><path d="M1236.5,435.0 C1240.4,462.8 1244.3,490.6 1248.2,490.6 C1256.0,490.6 1263.7,489.1 1271.5,486.0 C1280.2,482.6 1288.8,459.5 1297.5,459.5 C1309.3,459.5 1321.0,492.7 1332.8,492.7 C1340.8,492.7 1348.7,491.7 1356.7,489.6 C1365.3,487.4 1374.0,472.7 1382.6,472.7 C1390.2,472.7 1397.8,496.9 1405.4,496.9 C1418.7,496.9 1432.1,496.9 1445.4,496.9 C1452.7,496.9 1459.9,498.7 1467.2,498.7 C1471.2,498.7 1475.3,496.9 1479.3,496.9 C1483.5,496.9 1487.8,501.1 1492.0,501.1 C1496.3,501.1 1500.5,486.6 1504.8,486.6 C1508.8,486.6 1512.9,493.3 1516.9,493.3 C1520.7,493.3 1524.6,490.2 1528.4,487.2" fill="none" stroke="#c8332a" stroke-width="1.3" stroke-linejoin="round"/><path d="M1236.5,476.0 C1244.3,473.2 1252.2,470.4 1260.0,470.4 C1264.2,470.4 1268.4,475.0 1272.6,475.0 C1276.7,475.0 1280.9,459.5 1285.0,459.5 C1288.8,459.5 1292.7,466.8 1296.5,467.8 C1304.8,469.9 1313.1,470.9 1321.4,470.9 C1329.4,470.9 1337.3,467.8 1345.3,467.8 C1349.1,467.8 1352.9,470.3 1356.7,472.0 C1362.9,474.7 1369.2,479.3 1375.4,482.3 C1383.0,486.0 1390.6,490.4 1398.2,491.4 C1405.1,492.3 1411.9,492.7 1418.8,492.7 C1426.9,492.7 1434.9,490.8 1443.0,490.8 C1451.1,490.8 1459.1,499.3 1467.2,499.3 C1471.6,499.3 1476.1,493.3 1480.5,493.3 C1484.5,493.3 1488.6,493.9 1492.6,493.9 C1496.7,493.9 1500.7,486.0 1504.8,486.0 C1509.2,486.0 1513.6,486.6 1518.0,486.6 C1521.5,486.6 1524.9,482.1 1528.4,477.5" fill="none" stroke="#c034b0" stroke-width="1.2" stroke-linejoin="round"/><path d="M1236.5,524.9 C1240.4,505.7 1244.3,486.5 1248.2,486.5 C1251.1,486.5 1254.1,523.8 1257.0,523.8 C1258.4,523.8 1259.8,486.5 1261.2,486.5 C1262.8,486.5 1264.4,520.0 1266.0,520.0 C1268.3,520.0 1270.7,489.0 1273.0,489.0 C1277.0,489.0 1281.0,525.0 1285.0,525.0 C1289.0,525.0 1293.0,496.0 1297.0,496.0 C1301.3,496.0 1305.7,520.0 1310.0,520.0 C1313.7,520.0 1317.3,500.0 1321.0,500.0 C1324.7,500.0 1328.3,525.0 1332.0,525.0 C1336.3,525.0 1340.7,476.0 1345.0,476.0 C1346.7,476.0 1348.3,512.0 1350.0,512.0 C1355.0,512.0 1360.0,509.0 1365.0,509.0 C1370.0,509.0 1375.0,509.6 1380.0,509.6 C1388.1,509.6 1396.1,503.0 1404.2,503.0 C1408.2,503.0 1412.3,506.6 1416.3,506.6 C1421.5,506.6 1426.8,506.6 1432.0,506.6 C1435.7,506.6 1439.3,479.3 1443.0,479.3 C1451.1,479.3 1459.1,523.5 1467.2,523.5 C1471.6,523.5 1476.1,521.1 1480.5,516.3 C1484.3,512.1 1488.2,424.2 1492.0,424.2 C1495.8,424.2 1499.7,508.3 1503.5,511.4 C1508.0,515.1 1512.4,516.9 1516.9,516.9 C1520.7,516.9 1524.6,505.1 1528.4,493.3" fill="none" stroke="#2468c0" stroke-width="1.3" stroke-linejoin="round"/><path d="M1236.5,506.2 C1240.4,468.3 1244.3,430.4 1248.2,430.4 C1252.1,430.4 1255.9,533.7 1259.8,533.7 C1264.0,533.7 1268.2,327.7 1272.4,327.7 C1276.3,327.7 1280.1,502.0 1284.0,502.0 C1288.4,502.0 1292.9,453.2 1297.3,453.2 C1309.1,453.2 1321.0,513.5 1332.8,513.5 C1337.1,513.5 1341.3,411.3 1345.6,411.3 C1349.3,411.3 1353.0,533.7 1356.7,533.7 C1365.5,533.7 1374.2,533.7 1383.0,533.7 C1386.8,533.7 1390.7,496.3 1394.5,496.3 C1398.0,496.3 1401.5,533.7 1405.0,533.7 C1434.3,533.7 1463.7,533.7 1493.0,533.7 C1500.3,533.7 1507.7,532.8 1515.0,531.0 C1516.7,530.6 1518.3,530.0 1520.0,528.0 C1522.8,524.6 1525.6,498.8 1528.4,473.0" fill="none" stroke="#5b2bd4" stroke-width="1.4" stroke-linejoin="round"/></svg>
<div class="card" style="left:289px;top:673px;width:615px;height:331px;overflow:hidden"></div>
<div class="t" style="left:311.25px;top:695.05px;font-size:15px;font-weight:bold;color:#1a2a4b;letter-spacing:0.15px;">Latest open errors</div>
<div class="b" style="left:290px;top:730px;width:613px;height:41px;background:#f4f5f8;border-top:1px solid #e1e5ec;border-bottom:1px solid #dfe3eb"></div>
<div class="t" style="left:311.25px;top:743.38px;font-size:15.5px;color:#4a5b7e;">Action and error type</div>
<div class="t" style="right:735.7px;top:743.38px;font-size:15.5px;color:#4a5b7e;">Occurred</div>
<div class="sep" style="left:290px;top:850px;width:597px;background:#e3e7ee"></div>
<div class="sep" style="left:290px;top:930px;width:597px;background:#e3e7ee"></div>
<div class="t" style="left:311px;top:791.88px;font-size:15.5px;color:#3468c2;text-decoration:underline;text-underline-offset:1.5px;text-decoration-thickness:1px;">AlertBatch::TriggerNotFoundError</div>
<div class="t" style="left:550.4px;top:791.88px;font-size:15.5px;color:#6a7b9b;">#2789</div>
<div class="t" style="left:311px;top:814.48px;font-size:15.5px;color:#1f2e50;">AlertBatchWorker#perform</div>
<div class="b" style="left:504.4px;top:814px;width:109.20000000000005px;height:18.5px;background:#f2f4f7;border-radius:3px"></div>
<div class="t" style="left:504.4px;width:109.20000000000005px;text-align:center;top:817.71px;font-size:12.9px;font-family:'Liberation Mono',monospace;color:#34456a">kafka_worker</div>
<div class="t" style="right:735.7px;top:791.68px;font-size:15.5px;color:#1f2e50;">a few</div>
<div class="t" style="right:735.7px;top:813.88px;font-size:15.5px;color:#1f2e50;">seconds ago</div>
<div class="t" style="left:311px;top:871.88px;font-size:15.5px;color:#3468c2;text-decoration:underline;text-underline-offset:1.5px;text-decoration-thickness:1px;">InvalidSampleDataBreadcrumbs</div>
<div class="t" style="left:538px;top:871.88px;font-size:15.5px;color:#6a7b9b;">#3011</div>
<div class="t" style="left:311px;top:894.48px;font-size:15.5px;color:#1f2e50;">push_flusher</div>
<div class="b" style="left:408.8px;top:894px;width:85.59999999999997px;height:18.5px;background:#f2f4f7;border-radius:3px"></div>
<div class="t" style="left:408.8px;width:85.59999999999997px;text-align:center;top:897.71px;font-size:12.9px;font-family:'Liberation Mono',monospace;color:#34456a">processor</div>
<div class="t" style="right:735.7px;top:871.68px;font-size:15.5px;color:#1f2e50;">a few</div>
<div class="t" style="right:735.7px;top:893.88px;font-size:15.5px;color:#1f2e50;">seconds ago</div>
<div class="t" style="left:311px;top:951.88px;font-size:15.5px;color:#3468c2;text-decoration:underline;text-underline-offset:1.5px;text-decoration-thickness:1px;">Mongoid::Errors::DocumentNotFound</div>
<div class="t" style="left:576px;top:951.88px;font-size:15.5px;color:#6a7b9b;">#2652</div>
<div class="t" style="left:311px;top:974.48px;font-size:15.5px;color:#1f2e50;">VisitProcessWorker#perform</div>
<div class="b" style="left:517px;top:974px;width:93px;height:18.5px;background:#f2f4f7;border-radius:3px"></div>
<div class="t" style="left:517px;width:93px;text-align:center;top:977.71px;font-size:12.9px;font-family:'Liberation Mono',monospace;color:#34456a">background</div>
<div class="t" style="right:735.7px;top:951.68px;font-size:15.5px;color:#1f2e50;">a few</div>
<div class="t" style="right:735.7px;top:973.88px;font-size:15.5px;color:#1f2e50;">seconds ago</div>
<div class="b" style="left:887px;top:731px;width:16px;height:272px;background:#fafafa;border-left:1px solid #efefef"></div>
<div class="b" style="left:891.6px;top:734px;width:8.2px;height:81.5px;background:#c1c1c1;border-radius:4.5px"></div>
<div class="card" style="left:936px;top:673px;width:615px;height:331px"></div>
<div class="t" style="left:958px;top:695.05px;font-size:15px;font-weight:bold;color:#1a2a4b;letter-spacing:0.15px;">Most recent open performance measurements</div>
<div class="b" style="left:937px;top:730px;width:613px;height:41px;background:#f4f5f8;border-top:1px solid #e1e5ec;border-bottom:1px solid #dfe3eb"></div>
<div class="t" style="left:958.5px;top:743.38px;font-size:15.5px;color:#4a5b7e;">Action name</div>
<div class="t" style="left:1282.5px;top:743.38px;font-size:15.5px;color:#4a5b7e;">Avg. Duration</div>
<div class="t" style="right:88.40000000000009px;top:743.38px;font-size:15.5px;color:#4a5b7e;">Occurred</div>
<div class="sep" style="left:937px;top:850px;width:597px;background:#e3e7ee"></div>
<div class="sep" style="left:937px;top:930px;width:597px;background:#e3e7ee"></div>
<div class="t" style="left:958.5px;top:792.22px;font-size:15.1px;color:#3468c2;text-decoration:underline;text-underline-offset:1.5px;text-decoration-thickness:1px;">MarkersTimelineQuery</div>
<div class="b" style="left:1119.7px;top:791.5px;width:71.29999999999995px;height:19px;background:#f2f4f7;border-radius:3px"></div>
<div class="t" style="left:1119.7px;width:71.29999999999995px;text-align:center;top:795.11px;font-size:12.9px;font-family:'Liberation Mono',monospace;color:#34456a">graphql</div>
<div class="t" style="left:966.5px;top:814.38px;font-size:15.5px;color:#6a7b9b;">#1709</div>
<div class="t" style="left:1282.5px;top:802.88px;font-size:15.5px;color:#1f2e50;">114 <span style="color:#6a7b9b">ms</span></div>
<div class="t" style="left:958px;top:882.88px;font-size:15.5px;color:#3468c2;text-decoration:underline;text-underline-offset:1.5px;text-decoration-thickness:1px;">Unknown</div>
<div class="b" style="left:1031px;top:882px;width:70px;height:19px;background:#f2f4f7;border-radius:3px"></div>
<div class="t" style="left:1031px;width:70px;text-align:center;top:886.11px;font-size:12.9px;font-family:'Liberation Mono',monospace;color:#34456a">graphql</div>
<div class="t" style="left:1110px;top:882.88px;font-size:15.5px;color:#6a7b9b;">#1672</div>
<div class="t" style="left:1282.5px;top:882.88px;font-size:15.5px;color:#1f2e50;">120 <span style="color:#6a7b9b">ms</span></div>
<div class="t" style="left:958px;top:951.88px;font-size:15.5px;color:#3468c2;text-decoration:underline;text-underline-offset:1.5px;text-decoration-thickness:1px;">Admin::UpgradesController#trigger_event</div>
<div class="b" style="left:967px;top:973.4px;width:55px;height:18.6px;background:#f2f4f7;border-radius:3px"></div>
<div class="t" style="left:967px;width:55px;text-align:center;top:977.11px;font-size:12.9px;font-family:'Liberation Mono',monospace;color:#34456a">admin</div>
<div class="t" style="left:1030.4px;top:973.88px;font-size:15.5px;color:#6a7b9b;">#2452</div>
<div class="t" style="left:1282.5px;top:962.88px;font-size:15.5px;color:#1f2e50;">125 <span style="color:#6a7b9b">ms</span></div>
<div class="t" style="right:88.40000000000009px;top:791.68px;font-size:15.5px;color:#1f2e50;">a few</div>
<div class="t" style="right:88.40000000000009px;top:813.88px;font-size:15.5px;color:#1f2e50;">seconds ago</div>
<div class="t" style="right:88.40000000000009px;top:871.68px;font-size:15.5px;color:#1f2e50;">a few</div>
<div class="t" style="right:88.40000000000009px;top:893.88px;font-size:15.5px;color:#1f2e50;">seconds ago</div>
<div class="t" style="right:88.40000000000009px;top:951.68px;font-size:15.5px;color:#1f2e50;">a few</div>
<div class="t" style="right:88.40000000000009px;top:973.88px;font-size:15.5px;color:#1f2e50;">seconds ago</div>
<div class="b" style="left:1534px;top:731px;width:16px;height:272px;background:#fafafa;border-left:1px solid #efefef"></div>
<div class="b" style="left:1538.6px;top:734.4px;width:8.2px;height:83.60000000000002px;background:#c1c1c1;border-radius:4.5px"></div>
<div class="card" style="left:289px;top:1036px;width:615px;height:200px"></div>
<div class="t" style="left:311.3px;top:1058.90px;font-size:15px;font-weight:bold;color:#1a2a4b;">Worst 10 hosts by</div>
<div class="b" style="left:463.4px;top:1049.5px;width:220.2px;height:32px;background:#f5f6f9;border:1px solid #d6dce6;border-radius:4px"></div>
<div class="b" style="left:464.4px;top:1050.5px;width:88px;height:30px;background:#fff;border-radius:3px 0 0 3px"></div>
<div class="b" style="left:552.2px;top:1050.5px;width:1px;height:30px;background:#d6dce6"></div>
<div class="b" style="left:630.8px;top:1050.5px;width:1px;height:30px;background:#d6dce6"></div>
<div class="t" style="left:474.6px;top:1058.48px;font-size:15.5px;color:#1f2e50;">Load Avg.</div>
<div class="t" style="left:564px;top:1058.48px;font-size:15.5px;color:#6a7b9c;">Memory</div>
<div class="t" style="left:642.8px;top:1058.48px;font-size:15.5px;color:#6a7b9c;">Disk</div>
<div class="b" style="left:290px;top:1093px;width:613px;height:42px;background:#f4f5f8;border-top:1px solid #e1e5ec;border-bottom:1px solid #dfe3eb"></div>
<div class="t" style="left:311px;top:1106.58px;font-size:15.5px;color:#4a5b7e;">Hostname</div>
<div class="t" style="left:465.2px;top:1106.58px;font-size:15.5px;color:#4a5b7e;">Load Avg.</div>
<div class="t" style="left:601.2px;top:1106.58px;font-size:15.5px;color:#4a5b7e;">Memory</div>
<div class="t" style="left:805px;top:1106.58px;font-size:15.5px;color:#4a5b7e;">Disk (/)</div>
<div class="b" style="left:887px;top:1094px;width:16px;height:62px;background:#fafafa;border-left:1px solid #efefef"></div>
<div class="b" style="left:891.6px;top:1098px;width:8.2px;height:102px;background:#c1c1c1;border-radius:4.5px"></div>
<div class="card" style="left:936px;top:1036px;width:615px;height:200px"></div>
<div class="t" style="left:958px;top:1058.90px;font-size:15px;font-weight:bold;color:#1a2a4b;letter-spacing:0.15px;">Most recent detected anomalies</div>
<div class="t" style="left:1403.2px;top:1058.82px;font-size:15.1px;color:#3468c2;text-decoration:underline;text-underline-offset:1.5px;text-decoration-thickness:1px;">View all anomalies</div>
<div class="b" style="left:937px;top:1093px;width:613px;height:42px;background:#f4f5f8;border-top:1px solid #e1e5ec;border-bottom:1px solid #dfe3eb"></div>
<div class="t" style="left:958px;top:1106.58px;font-size:15.5px;color:#4a5b7e;">Trigger condition</div>
<div class="t" style="left:1257px;top:1106.58px;font-size:15.5px;color:#4a5b7e;">Details</div>
<div class="b" style="left:1534px;top:1094px;width:16px;height:62px;background:#fafafa;border-left:1px solid #efefef"></div>
<div class="b" style="left:1538.6px;top:1098.4px;width:8.2px;height:33.59999999999991px;background:#c1c1c1;border-radius:4.5px"></div>
</body></html>
